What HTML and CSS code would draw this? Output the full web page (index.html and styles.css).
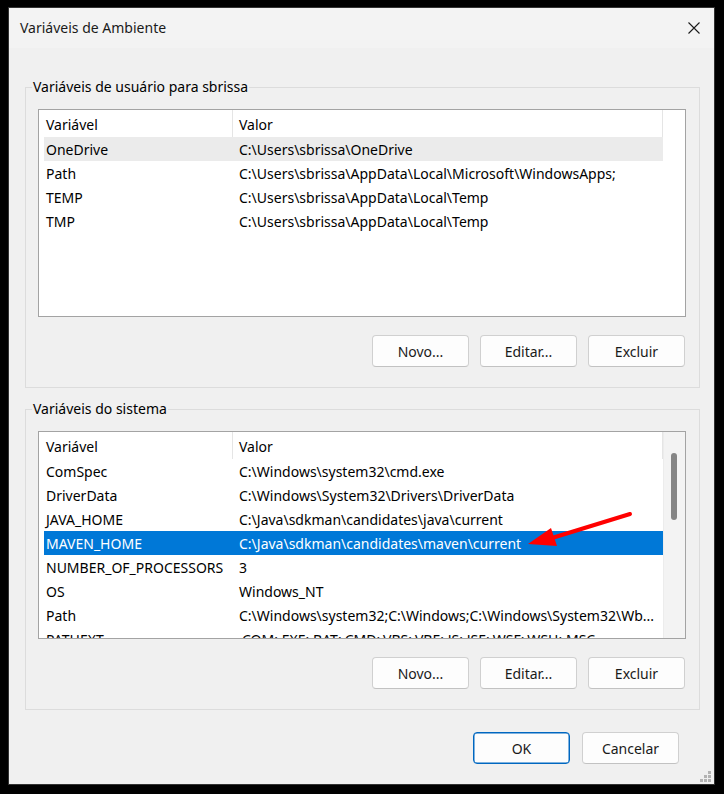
FILE: index.html
```html
<!DOCTYPE html>
<html lang="pt-BR">
<head>
<meta charset="utf-8">
<title>Variáveis de Ambiente</title>
<link rel="stylesheet" href="styles.css">
</head>
<body>
<div class="window">
  <div class="titlebar">
    <span class="title">Variáveis de Ambiente</span>
    <svg class="close" viewBox="0 0 12 12" width="12" height="12"><path d="M0.5 0.5 L11.5 11.5 M11.5 0.5 L0.5 11.5" stroke="#1a1a1a" stroke-width="1.1" fill="none"/></svg>
  </div>

  <fieldset class="group group-user">
    <legend>Variáveis de usuário para sbrissa</legend>
    <div class="group-body">
      <div class="list">
        <div class="list-body">
          <div class="row header"><div class="c1">Variável</div><div class="c2">Valor</div></div>
          <div class="row hover"><div class="c1">OneDrive</div><div class="c2">C:\Users\sbrissa\OneDrive</div></div>
          <div class="row"><div class="c1">Path</div><div class="c2">C:\Users\sbrissa\AppData\Local\Microsoft\WindowsApps;</div></div>
          <div class="row"><div class="c1">TEMP</div><div class="c2">C:\Users\sbrissa\AppData\Local\Temp</div></div>
          <div class="row"><div class="c1">TMP</div><div class="c2">C:\Users\sbrissa\AppData\Local\Temp</div></div>
        </div>
      </div>
      <div class="buttons">
        <button class="btn">Novo...</button>
        <button class="btn">Editar...</button>
        <button class="btn">Excluir</button>
      </div>
    </div>
  </fieldset>

  <fieldset class="group group-sys">
    <legend>Variáveis do sistema</legend>
    <div class="group-body">
      <div class="list">
        <div class="list-body">
          <div class="row header"><div class="c1">Variável</div><div class="c2">Valor</div></div>
          <div class="row"><div class="c1">ComSpec</div><div class="c2">C:\Windows\system32\cmd.exe</div></div>
          <div class="row"><div class="c1">DriverData</div><div class="c2">C:\Windows\System32\Drivers\DriverData</div></div>
          <div class="row"><div class="c1">JAVA_HOME</div><div class="c2">C:\Java\sdkman\candidates\java\current</div></div>
          <div class="row selected"><div class="c1">MAVEN_HOME</div><div class="c2">C:\Java\sdkman\candidates\maven\current</div></div>
          <div class="row"><div class="c1">NUMBER_OF_PROCESSORS</div><div class="c2">3</div></div>
          <div class="row"><div class="c1">OS</div><div class="c2">Windows_NT</div></div>
          <div class="row"><div class="c1">Path</div><div class="c2">C:\Windows\system32;C:\Windows;C:\Windows\System32\Wb...</div></div>
          <div class="row"><div class="c1">PATHEXT</div><div class="c2">.COM;.EXE;.BAT;.CMD;.VBS;.VBE;.JS;.JSE;.WSF;.WSH;.MSC</div></div>
        </div>
        <div class="scrollbar"><div class="thumb"></div></div>
      </div>
      <div class="buttons">
        <button class="btn">Novo...</button>
        <button class="btn">Editar...</button>
        <button class="btn">Excluir</button>
      </div>
    </div>
  </fieldset>

  <div class="footer">
    <button class="btn primary">OK</button>
    <button class="btn">Cancelar</button>
  </div>

  <svg class="arrow" viewBox="0 0 705 776" width="705" height="776">
    <line x1="621" y1="506" x2="543" y2="530" stroke="#ff0000" stroke-width="4" stroke-linecap="round"/>
    <polygon points="519,536 542,520 548,538" fill="#ff0000"/>
  </svg>

  <svg class="grip" viewBox="0 0 11 11" width="11" height="11">
    <rect x="8" y="0" width="3" height="3" fill="#b3b3b3"/>
    <rect x="4" y="4" width="3" height="3" fill="#b3b3b3"/>
    <rect x="8" y="4" width="3" height="3" fill="#b3b3b3"/>
    <rect x="0" y="8" width="3" height="3" fill="#b3b3b3"/>
    <rect x="4" y="8" width="3" height="3" fill="#b3b3b3"/>
    <rect x="8" y="8" width="3" height="3" fill="#b3b3b3"/>
  </svg>
</div>
</body>
</html>
```

FILE: styles.css
```css
html, body {
  margin: 0;
  background: #000;
}

body {
  font-family: "Noto Sans", "DejaVu Sans", sans-serif;
  font-size: 14px;
  color: #000;
  overflow: hidden;
}

.window {
  position: relative;
  width: 705px;
  height: 776px;
  margin: 7px 0 0 8px;
  border: 1px solid #333;
  background: #f0f0f0;
}

.titlebar {
  height: 40px;
  display: flex;
  align-items: center;
  justify-content: space-between;
  padding: 0 14px 0 11px;
  background: #f3f3f3;
}

.title {
  color: #1a1a1a;
  line-height: 20px;
}

.close {
  display: block;
}

.group {
  width: 675px;
  box-sizing: border-box;
  margin: 0 0 0 16px;
  padding: 0;
  border: 1px solid #dcdcdc;
  min-inline-size: 0;
}

.group-user {
  margin-top: 29px;
}

.group-sys {
  margin-top: 11px;
}

.group legend {
  margin-left: 6px;
  padding: 0 1px;
  line-height: 20px;
  font-size: 14px;
}

.group-body {
  padding: 12px 13px 20px 12px;
}

.list {
  height: 208px;
  box-sizing: border-box;
  border: 1px solid #a3a3a3;
  background: #fff;
  display: flex;
  overflow: hidden;
}

.list-body {
  flex: 1;
  padding-left: 5px;
  overflow: hidden;
}

.row {
  display: flex;
  width: 619px;
  height: 24px;
  line-height: 26px;
  white-space: nowrap;
}

.c1 {
  width: 189px;
  height: 24px;
  padding-left: 2px;
  box-sizing: border-box;
  overflow: hidden;
}

.c2 {
  width: 430px;
  height: 24px;
  padding-left: 6px;
  box-sizing: border-box;
  overflow: hidden;
}

.header {
  height: 27px;
  line-height: 24px;
}

.header .c1,
.header .c2 {
  height: 27px;
  padding-top: 3px;
  border-right: 1px solid #e5e5e5;
}

.hover {
  background: #ebebeb;
}

.selected {
  background: #0078d7;
  color: #fff;
}

.scrollbar {
  width: 22px;
  flex: none;
  background: #f3f3f3;
  border-left: 1px solid #ececec;
  box-sizing: border-box;
}

.thumb {
  width: 6px;
  height: 67px;
  margin: 21px 0 0 7px;
  background: #858585;
  border-radius: 3px;
}

.buttons {
  display: flex;
  justify-content: flex-end;
  gap: 11px;
  margin-top: 18px;
  padding-right: 1px;
}

.footer {
  display: flex;
  justify-content: flex-end;
  gap: 12px;
  margin-top: 22px;
  padding-right: 35px;
}

.btn {
  width: 97px;
  height: 32px;
  box-sizing: border-box;
  padding: 0;
  border: 1px solid #d0d0d0;
  border-bottom-color: #c2c2c2;
  border-radius: 4px;
  background: #fdfdfd;
  font-family: inherit;
  font-size: 14px;
  color: #1a1a1a;
}

.btn.primary {
  border: 1px solid #0067c0;
  box-shadow: inset 0 0 0 0.5px #0067c0;
}

.arrow {
  position: absolute;
  left: 0;
  top: 0;
  pointer-events: none;
}

.grip {
  position: absolute;
  right: 3px;
  bottom: 2px;
}
```
